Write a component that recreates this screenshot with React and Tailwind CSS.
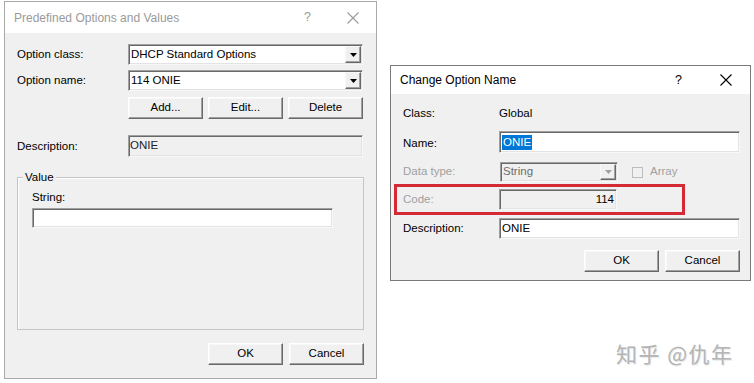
import React from "react";

const F = { fontFamily: '"Liberation Sans", Arial, sans-serif' };

function CloseX({ color }) {
  return (
    <svg width="12" height="12" viewBox="0 0 12 12" className="shrink-0">
      <path d="M0.5 0.5 L11.5 11.5 M11.5 0.5 L0.5 11.5" stroke={color} strokeWidth="1.1" fill="none" />
    </svg>
  );
}

function Sunken({ className = "", children }) {
  return (
    <div
      className={
        "border border-t-[#a0a0a0] border-l-[#a0a0a0] border-r-[#f8f8f8] border-b-[#f8f8f8] shadow-[inset_1px_1px_0_#696969,inset_-1px_-1px_0_#e3e3e3] " +
        className
      }
    >
      {children}
    </div>
  );
}

function Btn({ className = "", children }) {
  return (
    <div
      className={
        "flex items-center justify-center bg-[#f0f0f0] border border-t-white border-l-white border-r-[#696969] border-b-[#696969] shadow-[inset_-1px_-1px_0_#a0a0a0,inset_1px_1px_0_#f8f8f8] text-[11.5px] text-black " +
        className
      }
    >
      {children}
    </div>
  );
}

function Arrow({ disabled }) {
  return (
    <div className="w-[16px] h-full flex items-center justify-center bg-[#f0f0f0] border border-t-[#f8f8f8] border-l-[#f8f8f8] border-r-[#696969] border-b-[#696969] shadow-[inset_-1px_-1px_0_#a0a0a0]">
      <svg width="7" height="4" viewBox="0 0 7 4">
        <path d="M0 0 H7 L3.5 4 Z" fill={disabled ? "#a0a0a0" : "#000"} />
      </svg>
    </div>
  );
}

function Combo({ text, className = "", disabled }) {
  return (
    <Sunken className={"flex items-stretch p-[1px] pl-[2px] " + (disabled ? "bg-[#f0f0f0] " : "bg-white ") + className}>
      <div className={"flex-1 flex items-center text-[11.5px] " + (disabled ? "text-[#6d6d6d]" : "text-black")}>{text}</div>
      <Arrow disabled={disabled} />
    </Sunken>
  );
}

export default function App() {
  return (
    <div className="w-[754px] h-[383px] bg-white relative flex items-start overflow-hidden" style={F}>
      {/* Left dialog */}
      <div className="ml-[4px] mt-[1px] w-[373px] h-[378px] border border-[#aaaaaa] flex flex-col shrink-0">
        <div className="h-[31px] bg-white flex items-center pl-[9px] text-[12px] text-[#9a9a9a]">
          <span>Predefined Options and Values</span>
          <span className="ml-auto mr-[36px] text-[12.5px]">?</span>
          <div className="mr-[17px]">
            <CloseX color="#9a9a9a" />
          </div>
        </div>
        <div className="flex-1 bg-[#f0f0f0] pl-[12px] pr-[12px] pt-[11px] flex flex-col text-[11.5px] text-black">
          <div className="flex items-center h-[21px]">
            <div className="w-[111px]">Option class:</div>
            <Combo text="DHCP Standard Options" className="w-[235px] h-[21px]" />
          </div>
          <div className="flex items-center h-[21px] mt-[5px]">
            <div className="w-[111px]">Option name:</div>
            <Combo text="114 ONIE" className="w-[235px] h-[21px]" />
          </div>
          <div className="flex mt-[6px] pl-[111px]">
            <div className="w-[235px] flex justify-between">
              <Btn className="w-[75px] h-[22px]">Add...</Btn>
              <Btn className="w-[75px] h-[22px]">Edit...</Btn>
              <Btn className="w-[75px] h-[22px]">Delete</Btn>
            </div>
          </div>
          <div className="flex items-center h-[22px] mt-[16px]">
            <div className="w-[111px] pt-[2px]">Description:</div>
            <Sunken className="w-[235px] h-[22px] bg-[#f0f0f0] flex items-start pl-[1px] pt-[1px] text-[#222]">ONIE</Sunken>
          </div>
          <div className="relative mt-[20px] w-[347px] h-[153px] border border-[#c5c5c5] shadow-[inset_1px_1px_0_#ffffff] pl-[14px] pt-[12px]">
            <div className="absolute left-[5px] top-[-8px] bg-[#f0f0f0] px-[2px] leading-[14px]">Value</div>
            <div className="leading-[14px]">String:</div>
            <Sunken className="mt-[4px] w-[301px] h-[20px] bg-white" />
          </div>
          <div className="flex justify-end gap-[6px] mt-[13px] pr-[0px]">
            <Btn className="w-[75px] h-[22px]">OK</Btn>
            <Btn className="w-[75px] h-[22px]">Cancel</Btn>
          </div>
        </div>
      </div>

      {/* Right dialog */}
      <div className="relative ml-[13px] mt-[65px] w-[361px] h-[216px] border border-[#7a7a7a] flex flex-col shrink-0">
        <div className="h-[28px] bg-white flex items-center pl-[9px] text-[12px] text-black">
          <span>Change Option Name</span>
          <span className="ml-auto mr-[38px] text-[12.5px]">?</span>
          <div className="mr-[18px]">
            <CloseX color="#000" />
          </div>
        </div>
        <div className="flex-1 bg-[#f0f0f0] pl-[12px] pr-[10px] pt-[11px] flex flex-col text-[11.5px] text-black">
          <div className="flex items-center h-[18px]">
            <div className="w-[96px]">Class:</div>
            <div>Global</div>
          </div>
          <div className="flex items-center h-[22px] mt-[8px]">
            <div className="w-[96px] pt-[3px]">Name:</div>
            <Sunken className="flex-1 h-[22px] bg-white flex items-center pl-[2px]">
              <span className="bg-[#0078d7] text-white px-[1px] leading-[15px]">ONIE</span>
            </Sunken>
          </div>
          <div className="flex items-center h-[20px] mt-[9px]">
            <div className="w-[97px] text-[#a0a0a0]">Data type:</div>
            <Combo text="String" disabled className="w-[118px] h-[20px]" />
            <div className="ml-[14px] w-[11px] h-[11px] border border-[#bcbcbc] bg-[#f0f0f0]" />
            <div className="ml-[7px] text-[#a0a0a0]">Array</div>
          </div>
          <div className="flex items-center h-[21px] mt-[7px]">
            <div className="w-[96px] text-[#a0a0a0]">Code:</div>
            <Sunken className="w-[118px] h-[21px] bg-[#f0f0f0] flex items-center justify-end pr-[2px]">114</Sunken>
          </div>
          <div className="flex items-center h-[21px] mt-[8px]">
            <div className="w-[96px]">Description:</div>
            <Sunken className="flex-1 h-[21px] bg-white flex items-center pl-[2px]">ONIE</Sunken>
          </div>
          <div className="flex justify-end gap-[6px] mt-[11px]">
            <Btn className="w-[75px] h-[22px]">OK</Btn>
            <Btn className="w-[75px] h-[22px]">Cancel</Btn>
          </div>
        </div>
        <div className="absolute left-[3px] top-[118px] w-[291px] h-[31px] border-[3px] border-[#d42a35]" />
      </div>

      {/* Watermark */}
      <div
        className="absolute left-[616px] top-[338px] text-[21px] text-[#b4b4b4] tracking-[1.5px] [text-shadow:1px_1px_0_#e6e6e6]"
        style={{ fontFamily: '"Noto Sans CJK SC", "Noto Sans", sans-serif' }}
      >
        知乎 @仇年
      </div>
    </div>
  );
}
